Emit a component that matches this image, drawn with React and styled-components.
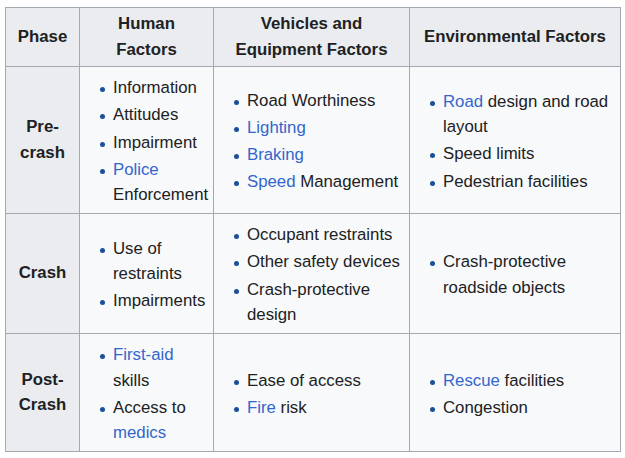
import React from "react";
import styled, { createGlobalStyle } from "styled-components";

const Global = createGlobalStyle`
  html, body { margin: 0; padding: 0; background: #ffffff; }
  body {
    padding: 7px 0 0 5px;
    font-family: "Liberation Sans", Arial, sans-serif;
    font-size: 16.8px;
    color: #202122;
  }
`;

const Table = styled.table`
  border-collapse: collapse;
  table-layout: fixed;
  width: 615px;
  background: #f8f9fa;
  border: 1px solid #a2a9b1;
  color: #202122;
  line-height: 25.5px;
`;

const Col = styled.col`
  width: ${(p) => p.$w}px;
`;

const Head = styled.th`
  background: #eaecf0;
  border: 1px solid #a2a9b1;
  padding: 3.4px 6.4px;
  font-weight: bold;
  text-align: center;
  vertical-align: middle;
`;

const Cell = styled.td`
  border: 1px solid #a2a9b1;
  padding: 3.4px 6.4px;
  text-align: left;
  vertical-align: middle;
`;

const List = styled.ul`
  list-style: none;
  margin: 5px 0 0 26.6px;
  padding: 0;
`;

const Item = styled.li`
  position: relative;
  margin-bottom: 1.7px;
  &::before {
    content: "";
    position: absolute;
    left: -12.5px;
    top: 12px;
    width: 5px;
    height: 5px;
    border-radius: 50%;
    background: #1a4f99;
  }
`;

const Link = styled.a`
  color: #3366cc;
  text-decoration: none;
`;

const rows = [
  {
    phase: "Pre-crash",
    cols: [
      [["Information"], ["Attitudes"], ["Impairment"], [<Link key="l">Police</Link>, " Enforcement"]],
      [["Road Worthiness"], [<Link key="l">Lighting</Link>], [<Link key="l">Braking</Link>], [<Link key="l">Speed</Link>, " Management"]],
      [[<Link key="l">Road</Link>, " design and road layout"], ["Speed limits"], ["Pedestrian facilities"]],
    ],
  },
  {
    phase: "Crash",
    cols: [
      [["Use of restraints"], ["Impairments"]],
      [["Occupant restraints"], ["Other safety devices"], ["Crash-protective design"]],
      [["Crash-protective roadside objects"]],
    ],
  },
  {
    phase: "Post-Crash",
    cols: [
      [[<Link key="l">First-aid</Link>, " skills"], ["Access to ", <Link key="m">medics</Link>]],
      [["Ease of access"], [<Link key="l">Fire</Link>, " risk"]],
      [[<Link key="l">Rescue</Link>, " facilities"], ["Congestion"]],
    ],
  },
];

export default function App() {
  return (
    <>
      <Global />
      <Table>
        <colgroup>
          <Col $w={74} />
          <Col $w={134} />
          <Col $w={196} />
          <Col $w={211} />
        </colgroup>
        <thead>
          <tr>
            <Head>Phase</Head>
            <Head>Human Factors</Head>
            <Head>Vehicles and Equipment Factors</Head>
            <Head>Environmental Factors</Head>
          </tr>
        </thead>
        <tbody>
          {rows.map((r) => (
            <tr key={r.phase}>
              <Head>{r.phase}</Head>
              {r.cols.map((items, i) => (
                <Cell key={i}>
                  <List>
                    {items.map((parts, j) => (
                      <Item key={j}>{parts}</Item>
                    ))}
                  </List>
                </Cell>
              ))}
            </tr>
          ))}
        </tbody>
      </Table>
    </>
  );
}
